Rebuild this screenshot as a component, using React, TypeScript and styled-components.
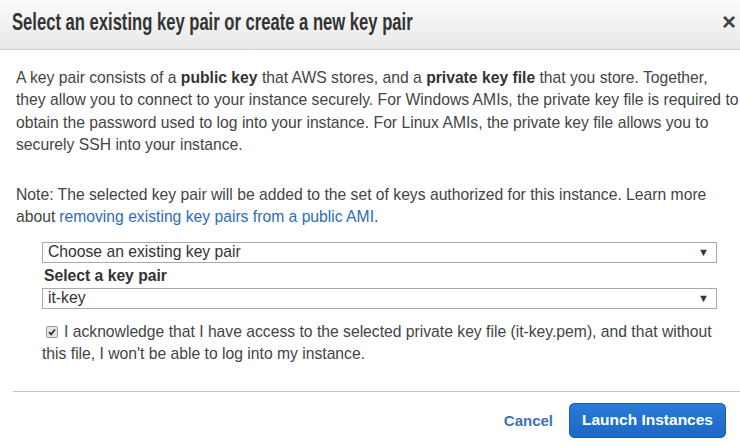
import React from 'react';
import styled, { createGlobalStyle } from 'styled-components';

const GlobalStyle = createGlobalStyle`
  html, body {
    margin: 0;
    padding: 0;
    background: #ffffff;
    overflow: hidden;
  }
  body {
    font-family: "Liberation Sans", Arial, sans-serif;
  }
`;

// 对话框外框，比视口略宽，右侧被裁掉
const Dialog = styled.div`
  width: 760px;
  height: 447px;
  display: flex;
  flex-direction: column;
  background: #fff;
`;

const Header = styled.div`
  height: 50px;
  flex: 0 0 50px;
  display: flex;
  align-items: center;
  justify-content: space-between;
  padding: 0 0 0 12px;
  background: linear-gradient(to bottom, #fbfbfb 0%, #e9e9e9 100%);
  border-bottom: 1px solid #cfcfcf;
  box-sizing: border-box;
`;

// 标题字体偏窄，横向压缩
const Title = styled.h3`
  margin: 0 0 6px 0;
  font-size: 24px;
  font-weight: bold;
  color: #333;
  white-space: nowrap;
  transform: scaleX(0.692);
  transform-origin: left center;
`;

const Close = styled.span`
  margin: 0 24px 6px 0;
  font-size: 24px;
  font-weight: bold;
  color: #444;
  line-height: 1;
`;

const Body = styled.div`
  padding: 17px 0 0 16px;
  color: #444;
  font-size: 15.7px;
`;

const Para = styled.p<{ $gap?: number }>`
  margin: 0 0 ${(p) => p.$gap ?? 0}px 0;
  line-height: 22.3px;
  white-space: nowrap;

  b {
    color: #333;
  }
`;

const Link = styled.a`
  color: #2c6db5;
  text-decoration: none;
  margin-left: 4px;
`;

const Form = styled.div`
  margin: 13px 0 0 26px;
  width: 675px;
  display: flex;
  flex-direction: column;
`;

const SelectBox = styled.div`
  height: 21px;
  box-sizing: border-box;
  border: 1px solid #a9a9a9;
  display: flex;
  align-items: center;
  justify-content: space-between;
  padding: 0 7px 0 5px;
  color: #333;
  background: #fff;
`;

const Arrow = styled.span`
  font-size: 11px;
  color: #333;
`;

const Label = styled.label`
  display: block;
  margin: 3px 0 2px 2px;
  font-weight: bold;
  line-height: 20px;
  color: #333;
`;

const Ack = styled.div`
  margin-top: 12px;
  line-height: 22px;
  color: #444;
  white-space: nowrap;
`;

const Check = styled.span`
  display: inline-block;
  width: 10px;
  height: 10px;
  margin: 0 6px 0 4px;
  border: 1px solid #9a9a9a;
  border-radius: 2px;
  background: #e6e6e6;
  vertical-align: -1px;
  position: relative;

  svg {
    position: absolute;
    left: 1px;
    top: 1px;
  }
`;

const Divider = styled.div`
  margin: 26px 0 0 13px;
  height: 1px;
  background: #c4c4c4;
`;

const Footer = styled.div`
  display: flex;
  justify-content: flex-end;
  align-items: center;
  gap: 16px;
  padding: 11px 34px 0 0;
`;

const CancelLink = styled.a`
  color: #3b73b9;
  font-weight: bold;
  font-size: 15px;
  text-decoration: none;
`;

const PrimaryButton = styled.button`
  width: 157px;
  height: 35px;
  border: 1px solid #1b5eaf;
  border-radius: 5px;
  background: linear-gradient(to bottom, #2a7bd8 0%, #1d68c4 100%);
  color: #fff;
  font-family: "Liberation Sans", Arial, sans-serif;
  font-weight: bold;
  font-size: 15.5px;
  padding: 0;
`;

export default function App() {
  return (
    <>
      <GlobalStyle />
      <Dialog>
        <Header>
          <Title>Select an existing key pair or create a new key pair</Title>
          <Close>×</Close>
        </Header>
        <Body>
          <Para $gap={28}>
            A key pair consists of a <b>public key</b> that AWS stores, and a <b>private key file</b> that you store. Together,
            <br />
            they allow you to connect to your instance securely. For Windows AMIs, the private key file is required to
            <br />
            obtain the password used to log into your instance. For Linux AMIs, the private key file allows you to
            <br />
            securely SSH into your instance.
          </Para>
          <Para>
            Note: The selected key pair will be added to the set of keys authorized for this instance. Learn more
            <br />
            about<Link>removing existing key pairs from a public AMI</Link>.
          </Para>
          <Form>
            <SelectBox>
              <span>Choose an existing key pair</span>
              <Arrow>▼</Arrow>
            </SelectBox>
            <Label>Select a key pair</Label>
            <SelectBox>
              <span>it-key</span>
              <Arrow>▼</Arrow>
            </SelectBox>
            <Ack>
              <Check>
                <svg width="8" height="8" viewBox="0 0 8 8">
                  <path d="M1 4.2 L3.1 6.3 L7 1.5" fill="none" stroke="#333" strokeWidth="1.8" />
                </svg>
              </Check>
              I acknowledge that I have access to the selected private key file (it-key.pem), and that without
              <br />
              this file, I won't be able to log into my instance.
            </Ack>
          </Form>
        </Body>
        <Divider />
        <Footer>
          <CancelLink>Cancel</CancelLink>
          <PrimaryButton>Launch Instances</PrimaryButton>
        </Footer>
      </Dialog>
    </>
  );
}
